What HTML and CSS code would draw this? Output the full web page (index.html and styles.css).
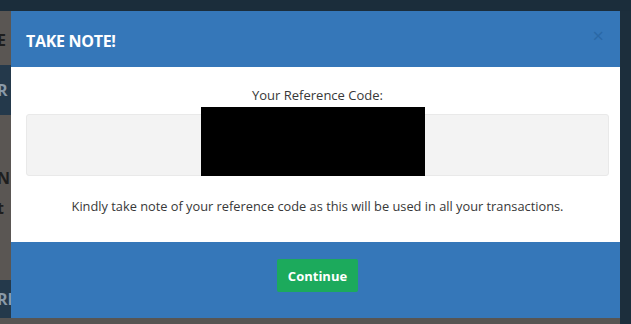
FILE: index.html
```html
<!DOCTYPE html>
<html lang="en">
<head>
    <meta charset="UTF-8">
    <meta name="viewport" content="width=device-width, initial-scale=1.0">
    <title>Take Note</title>
    <link rel="stylesheet" href="styles.css">
</head>
<body>
    <div class="page">
        <div class="topbar"></div>
        <div class="page-main">
            <div class="band band-gray band-title"><span class="ghost dark">E</span></div>
            <div class="band band-navy band-tabs"><span class="ghost light">R</span></div>
            <div class="band band-gray band-content">
                <span class="ghost dark">N</span>
                <span class="ghost dark">t</span>
            </div>
            <div class="band band-navy band-foot"><span class="ghost light">RE</span></div>
            <div class="bottombar"></div>
        </div>
    </div>

    <div class="modal">
        <div class="modal-header">
            <h2>TAKE NOTE!</h2>
            <span class="close">&times;</span>
        </div>
        <div class="modal-body">
            <p class="label">Your Reference Code:</p>
            <div class="code-box">
                <div class="redact"></div>
            </div>
            <p class="note">Kindly take note of your reference code as this will be used in all your transactions.</p>
        </div>
        <div class="modal-footer">
            <button class="continue-btn">Continue</button>
        </div>
    </div>
</body>
</html>
```

FILE: styles.css
```css
body {
    margin: 0;
    padding: 0;
    font-family: "Open Sans", "Liberation Sans", sans-serif;
    background-color: #1c2e3c;
    width: 631px;
    height: 324px;
    overflow: hidden;
}

.page {
    display: flex;
    flex-direction: column;
    height: 324px;
}

.topbar {
    height: 11px;
    background-color: #1b2d3b;
}

.page-main {
    flex: 1;
    display: flex;
    flex-direction: column;
    margin-right: 11px;
}

.band {
    font-size: 16px;
    font-weight: bold;
}

.band-gray {
    background-color: #5a5653;
}

.band-navy {
    background-color: #24394b;
}

.band-title {
    height: 54px;
    padding-top: 18px;
    box-sizing: border-box;
}

.band-tabs {
    height: 50px;
    padding-top: 14px;
    box-sizing: border-box;
}

.band-content {
    height: 165px;
    display: flex;
    flex-direction: column;
    gap: 8px;
    padding-top: 52px;
    box-sizing: border-box;
}

.band-foot {
    height: 38px;
    padding-top: 8px;
    box-sizing: border-box;
}

.bottombar {
    flex: 1;
    background-color: #575553;
}

.ghost {
    display: block;
    margin-left: -3px;
}

.ghost.dark {
    color: #1e1e1e;
}

.ghost.light {
    color: #8a9aa8;
}

/* modal */
.modal {
    position: absolute;
    left: 11px;
    top: 11px;
    width: 609px;
    height: 307px;
    display: flex;
    flex-direction: column;
    background-color: #fff;
}

.modal-header {
    height: 56px;
    background-color: #3577b9;
    display: flex;
    align-items: center;
    justify-content: space-between;
    padding: 0 16px 0 15px;
    box-sizing: border-box;
}

.modal-header h2 {
    margin: 0;
    padding-top: 3px;
    color: #fff;
    font-size: 16px;
    font-weight: bold;
    letter-spacing: -0.3px;
}

.close {
    color: #2a68a6;
    font-size: 20px;
    margin-top: -8px;
}

.modal-body {
    height: 175px;
    padding: 19px 11px 0 15px;
    box-sizing: border-box;
    text-align: center;
    color: #383838;
}

.label {
    margin: 0 0 10px;
    font-size: 13px;
    line-height: 18px;
}

.code-box {
    position: relative;
    height: 60px;
    background-color: #f3f3f3;
    border: 1px solid #e9e9e9;
    border-radius: 3px;
}

.redact {
    position: absolute;
    left: 174px;
    top: -8px;
    width: 224px;
    height: 69px;
    background-color: #000;
}

.note {
    margin: 21px 0 0;
    font-size: 12.8px;
    line-height: 18px;
}

.modal-footer {
    flex: 1;
    background-color: #3577b9;
    display: flex;
    justify-content: center;
    padding-top: 17px;
    box-sizing: border-box;
}

.continue-btn {
    width: 81px;
    height: 33px;
    background-color: #1caa5c;
    border: none;
    border-radius: 2px;
    color: #fff;
    font-family: "Open Sans", "Liberation Sans", sans-serif;
    font-size: 13px;
    font-weight: bold;
    padding: 0;
    margin-left: 4px;
    cursor: pointer;
}
```
